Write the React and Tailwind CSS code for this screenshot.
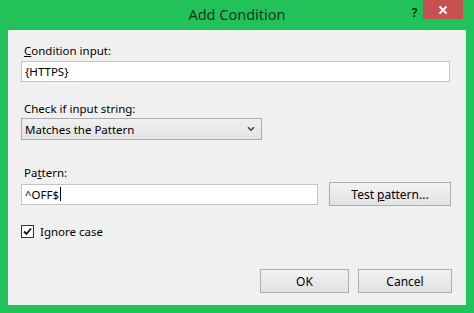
import React from "react";

const font = { fontFamily: '"Segoe UI", "Noto Sans", "Open Sans", sans-serif' };

function Btn({ children, className = "" }) {
  return (
    <div
      className={`flex items-center justify-center h-[24px] border border-[#adadad] bg-gradient-to-b from-[#f2f2f2] to-[#e2e2e2] text-[12px] text-black ${className}`}
    >
      {children}
    </div>
  );
}

export default function App() {
  return (
    <div
      className="w-[474px] h-[313px] bg-[#22c25a] flex flex-col overflow-hidden"
      style={font}
    >
      {/* Title bar */}
      <div className="h-[30px] flex items-start shrink-0">
        <div className="w-[74px]" />
        <div className="flex-1 h-[30px] flex items-center justify-center text-[14.5px] text-[#14391f]">
          Add Condition
        </div>
        <div className="w-[74px] flex items-start">
          <div className="w-[23px] h-[22px] flex items-center justify-center text-[12px] font-bold text-[#102a18] pt-[4px] pl-[6px]">
            ?
          </div>
          <div className="w-[40px] h-[19px] bg-[#c75050] flex items-center justify-center">
            <svg width="10" height="10" viewBox="0 0 10 10">
              <path d="M1.5 1.5 L8.5 8.5 M8.5 1.5 L1.5 8.5" stroke="#fff" strokeWidth="1.8" />
            </svg>
          </div>
        </div>
      </div>

      {/* Content */}
      <div className="mx-[8px] h-[275px] bg-[#f0f0f0] pl-[13px] pt-[13px] flex flex-col text-[11.5px] text-black leading-[15px]">
        <div className="pl-[3px]">
          <span className="underline">C</span>ondition input:
        </div>
        <div className="mt-[3px] w-[429px] h-[21px] border border-[#c3c3c3] bg-white flex items-center pl-[3px]">
          {"{HTTPS}"}
        </div>

        <div className="mt-[19px] pl-[3px]">Check if input string:</div>
        <div className="mt-[2px] w-[241px] h-[22px] border border-[#acacac] bg-gradient-to-b from-[#f0f0f0] to-[#e3e3e3] flex items-center justify-between pl-[3px] pr-[6px]">
          <span>Matches the Pattern</span>
          <svg width="8" height="6" viewBox="0 0 8 6">
            <path d="M1 1.2 L4 4.2 L7 1.2" stroke="#444" strokeWidth="1.6" fill="none" />
          </svg>
        </div>

        <div className="mt-[25px] pl-[3px]">
          Pa<span className="underline">t</span>tern:
        </div>
        <div className="mt-[2px] flex items-center">
          <div className="w-[297px] h-[21px] border border-[#c3c3c3] bg-white flex items-center pl-[3px]">
            ^OFF$<span className="inline-block w-[1px] h-[14px] bg-black ml-[1px]" />
          </div>
          <Btn className="ml-[11px] w-[122px] text-[11.5px]">
            Test <span className="underline ml-[3px]">p</span>attern...
          </Btn>
        </div>

        <div className="mt-[18px] flex items-center">
          <div className="w-[13px] h-[13px] border border-[#333] bg-white flex items-center justify-center">
            <svg width="9" height="9" viewBox="0 0 9 9">
              <path d="M1 4.5 L3.5 7 L8 1.5" stroke="#111" strokeWidth="1.8" fill="none" />
            </svg>
          </div>
          <span className="ml-[6px]">Ignore case</span>
        </div>

        <div className="mt-[30px] flex">
          <Btn className="ml-[239px] w-[89px] border-[#4d90d6] from-[#eef4fa] to-[#e0e9f2]">OK</Btn>
          <Btn className="ml-[9px] w-[94px]">Cancel</Btn>
        </div>
      </div>
    </div>
  );
}
